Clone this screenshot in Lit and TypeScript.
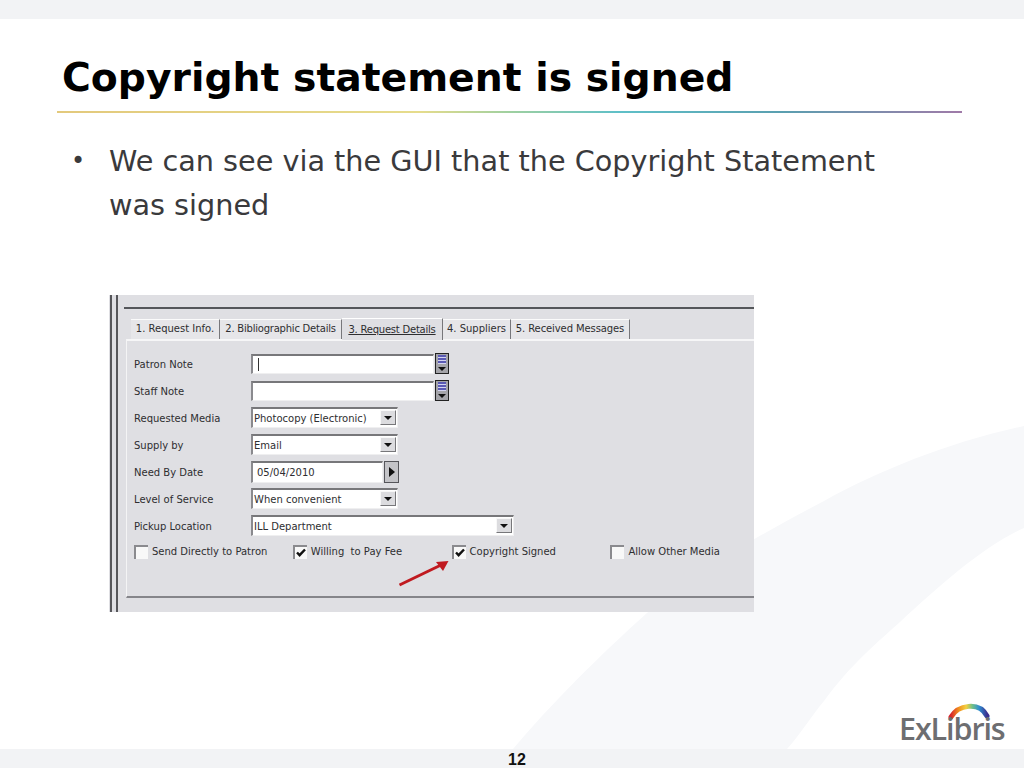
import { LitElement, html, css, svg } from "lit";
import { customElement } from "lit/decorators.js";

@customElement("app-root")
export class AppRoot extends LitElement {
  static styles = css`
    :host { display: block; }
    .slide { position: relative; width: 1024px; height: 768px; background: #fff; overflow: hidden; display: flex; flex-direction: column; font-family: "DejaVu Sans", Verdana, sans-serif; }
    .swoosh { position: absolute; left: 0; top: 0; }
    .topbar { height: 19px; background: #f2f3f5; flex: none; position: relative; }
    .head { position: relative; margin: 0 62px 0 57px; height: 92px; border-bottom: 2px solid; border-image: linear-gradient(90deg, #e3c97c 0%, #e6dc8c 40%, #9fd0a0 50%, #5fc0c8 62%, #5a9fb0 80%, #a07aa8 100%) 1; box-sizing: content-box; }
    h1 { margin: 0; padding: 34px 0 0 5px; font-size: 39.3px; line-height: 50px; font-weight: 700; color: #000; white-space: nowrap; }
    .bullets { position: relative; margin: 26px 0 0 71px; display: flex; gap: 28px; color: #3a3a3c; font-size: 28.7px; line-height: 44px; }
    .dot { width: 10px; font-size: 24px; }
    .text { width: 800px; }
    .shot { position: relative; margin: 68px 0 0 109px; width: 645px; height: 317px; background: #dfdfe3; display: flex; flex: none; font-family: "DejaVu Sans", Tahoma, sans-serif; color: #2e2e30; font-size: 10px; overflow: hidden; }
    .rails { width: 17px; flex: none; display: flex; gap: 4px; padding-left: 1px; box-sizing: border-box; }
    .rail { width: 2px; background: #56565a; }
    .main { flex: 1; min-width: 0; display: flex; flex-direction: column; }
    .topline { height: 2px; margin: 12px 0 0 -2px; background: #54565a; flex: none; }
    .work { padding: 9px 0 0 0; display: flex; flex-direction: column; }
    .tabs { display: grid; grid-template-columns: 89px 122px 101px 68px 119px; justify-content: start; margin-left: 5px; height: 21px; align-items: end; }
    .tab { height: 20px; line-height: 18px; text-align: center; background: #e6e6e9; border-top: 1px solid #fbfbfb; border-right: 1px solid #77777b; white-space: nowrap; box-sizing: border-box; }
    .tab.tight { letter-spacing: -0.22px; }
    .tab.slim { letter-spacing: -0.1px; }
    .tab.on { height: 22px; background: #dfdfe3; text-decoration: underline; border-top: 1px solid #fff; margin-bottom: -1px; line-height: 21px; position: relative; }
    .panel { border-top: 2px solid #f6f6f7; border-left: 1px solid #f4f4f5; height: 259px; border-bottom: 2px solid #85858a; box-sizing: border-box; padding: 10px 0 0 7px; width: 100%; }
    .form { display: grid; grid-template-columns: 117px 1fr; grid-auto-rows: 27px; align-items: center; }
    .fieldline { display: flex; align-items: center; gap: 1px; padding-bottom: 2px; }
    .box { height: 21px; background: #fff; box-sizing: border-box; border-top: 2px solid #77777a; border-left: 2px solid #8a8a8e; border-right: 1px solid #efeff0; border-bottom: 1px solid #efeff0; display: flex; align-items: center; padding-left: 1px; position: relative; white-space: nowrap; }
    .box.w182 { width: 183px; height: 20px; }
    .box.w146 { width: 147px; }
    .box.w262 { width: 263px; }
    .box.w131 { width: 132px; padding-left: 4px; height: 22px; }
    .caret { width: 1px; height: 13px; background: #333; margin-left: 4px; }
    .arrow { position: absolute; right: 1px; top: 1px; width: 16px; height: 15px; background: #dcdcdf; border-right: 1px solid #77777a; border-bottom: 1px solid #77777a; border-top: 1px solid #f8f8f8; border-left: 1px solid #f8f8f8; box-sizing: border-box; display: flex; align-items: center; justify-content: center; }
    .tri { width: 0; height: 0; border-left: 4px solid transparent; border-right: 4px solid transparent; border-top: 4px solid #111; }
    .notebtn { width: 14px; height: 21px; border: 1px solid #222; background: #a4a4a9; box-sizing: border-box; display: flex; flex-direction: column; align-items: center; justify-content: space-between; padding: 1px 0 2px; }
    .lines { width: 8px; height: 9px; background: repeating-linear-gradient(#5a5ab4 0 2px, #d4d4f2 2px 3px); }
    .datebtn { width: 15px; height: 22px; background: #c4c4c8; border: 1px solid #55555a; box-sizing: border-box; display: flex; align-items: center; justify-content: center; }
    .triR { width: 0; height: 0; border-top: 5px solid transparent; border-bottom: 5px solid transparent; border-left: 6px solid #111; }
    .checks { display: grid; grid-template-columns: repeat(4, 158.8px); margin-top: -1px; height: 25px; align-items: center; }
    .check { display: flex; align-items: center; gap: 4px; white-space: pre; }
    .cb { width: 14px; height: 14px; box-sizing: border-box; background: #f8f8f8; border-top: 2px solid #8a8a8e; border-left: 2px solid #8a8a8e; display: block; }
    .cb svg { display: block; }
    .pointer { position: absolute; left: 0; top: 0; pointer-events: none; }
    .logo { position: absolute; left: 899px; top: 703px; width: 110px; height: 42px; }
    .logotext { position: absolute; left: 0; top: 5px; font-family: "Open Sans", sans-serif; font-size: 30.5px; line-height: 40px; font-weight: 600; color: #6d6e71; letter-spacing: -1.1px; white-space: nowrap; }
    .arc { position: absolute; left: 0; top: 0; }
    .footer { position: absolute; left: 0; right: 0; bottom: 0; height: 19px; background: #f2f3f5; display: flex; justify-content: center; padding-left: 10px; box-sizing: border-box; font-family: "Liberation Sans", Arial, sans-serif; font-weight: 700; font-size: 16px; line-height: 22px; color: #111; }
  `;

  private field(label: string, control: unknown) {
    return html`<div>${label}</div><div class="fieldline">${control}</div>`;
  }

  private select(cls: string, value: string) {
    return html`<div class="box ${cls}">${value}<span class="arrow"><span class="tri"></span></span></div>`;
  }

  private noteBtn() {
    return html`<div class="notebtn"><span class="lines"></span><span class="tri"></span></div>`;
  }

  private check(label: string, on: boolean) {
    return html`<label class="check"><span class="cb">${on
      ? html`<svg width="12" height="12" viewBox="0 0 12 12"><path d="M2 5.5 L4.6 8.2 L10 2.5" fill="none" stroke="#111" stroke-width="2.4"/></svg>`
      : ""}</span>${label}</label>`;
  }

  render() {
    return html`<div class="slide">
      <svg class="swoosh" width="1024" height="768" viewBox="0 0 1024 768">
        ${svg`<path d="M1024 426 C 950 442 880 470 824 501 C 750 540 695 572 647 613 C 600 655 550 705 513 749 L 787 749 C 800 735 812 715 824 701 C 850 665 880 640 900 622 C 940 585 985 545 1024 528 Z" fill="#f7f8fa"/>`}
      </svg>
      <div class="topbar"></div>
      <div class="head"><h1>Copyright statement is signed</h1></div>
      <div class="bullets">
        <div class="dot">•</div>
        <div class="text">We can see via the GUI that the Copyright Statement was signed</div>
      </div>
      <div class="shot">
        <div class="rails"><div class="rail"></div><div class="rail"></div></div>
        <div class="main">
          <div class="topline"></div>
          <div class="work">
            <div class="tabs">
              <div class="tab">1. Request Info.</div>
              <div class="tab tight">2. Bibliographic Details</div>
              <div class="tab on tight">3. Request Details</div>
              <div class="tab">4. Suppliers</div>
              <div class="tab slim">5. Received Messages</div>
            </div>
            <div class="panel">
              <div class="form">
                ${this.field("Patron Note", html`<div class="box w182"><span class="caret"></span></div>${this.noteBtn()}`)}
                ${this.field("Staff Note", html`<div class="box w182"></div>${this.noteBtn()}`)}
                ${this.field("Requested Media", this.select("w146", "Photocopy (Electronic)"))}
                ${this.field("Supply by", this.select("w146", "Email"))}
                ${this.field("Need By Date", html`<div class="box w131">05/04/2010</div><div class="datebtn"><span class="triR"></span></div>`)}
                ${this.field("Level of Service", this.select("w146", "When convenient"))}
                ${this.field("Pickup Location", this.select("w262", "ILL Department"))}
              </div>
              <div class="checks">
                ${this.check("Send Directly to Patron", false)}
                ${this.check("Willing  to Pay Fee", true)}
                ${this.check("Copyright Signed", true)}
                ${this.check("Allow Other Media", false)}
              </div>
            </div>
          </div>
        </div>
      </div>
      <svg class="pointer" width="1024" height="768" viewBox="0 0 1024 768">
        <path d="M399.5 585 L440 565.5" stroke="#c01a20" stroke-width="3" fill="none"/>
        <path d="M448.5 561 L436 562 L443 571 Z" fill="#c01a20"/>
      </svg>
      <div class="logo">
        <svg class="arc" width="110" height="42" viewBox="0 0 110 42">
          <defs>
            <linearGradient id="rb" x1="0" x2="1" y1="0" y2="0">
              <stop offset="0" stop-color="#d8262c"/>
              <stop offset="0.2" stop-color="#f08a1d"/>
              <stop offset="0.42" stop-color="#f4d03f"/>
              <stop offset="0.6" stop-color="#6dbf8b"/>
              <stop offset="0.78" stop-color="#2f8fd0"/>
              <stop offset="1" stop-color="#3a2f8f"/>
            </linearGradient>
          </defs>
          <path d="M52 14 C 59 2 80 -2 88 13" fill="none" stroke="url(#rb)" stroke-width="5" stroke-linecap="round"/>
        </svg>
        <div class="logotext">ExLibris</div>
      </div>
      <div class="footer">12</div>
    </div>`;
  }
}
